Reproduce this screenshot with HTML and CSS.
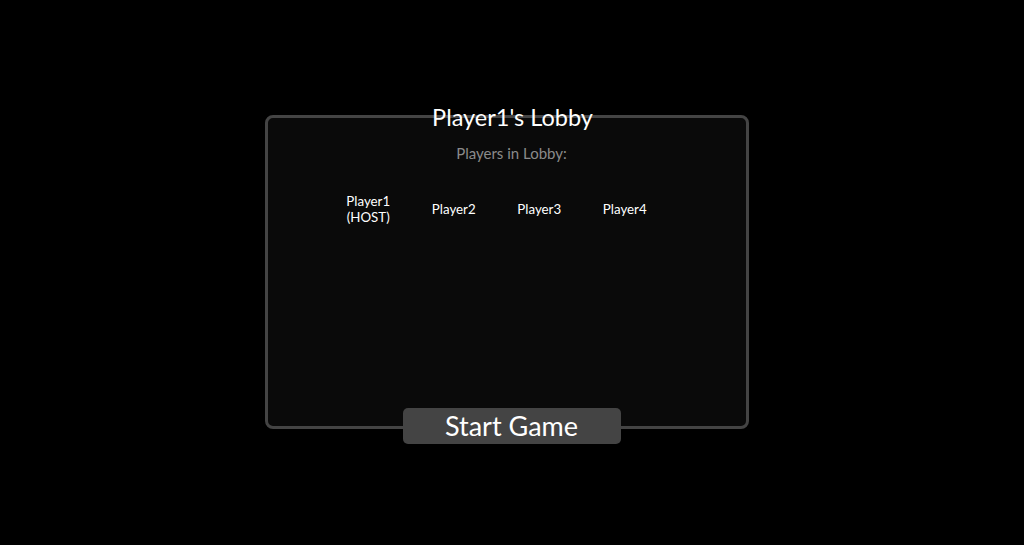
FILE: index.html
```
<!doctype html>
<html lang="en">
	<head>
		<meta charset="UTF-8" />
		<meta name="viewport" content="width=device-width, initial-scale=1.0" />
		<title>Lobby</title>
		<link rel="stylesheet" href="styles.css">
	</head>
	<body>
		<div class="lobby">
			<h1 class="lobby-title">Player1's Lobby</h1>
			<p class="lobby-sub">Players in Lobby:</p>
			<ul class="player-list">
				<li>Player1<br>(HOST)</li>
				<li>Player2</li>
				<li>Player3</li>
				<li>Player4</li>
			</ul>
			<button class="start-btn">Start Game</button>
		</div>
	</body>
</html>
```

FILE: styles.css
```
html, body {
	height: 100%;
}
body {
	margin: 0;
	background: #000;
	font-family: Lato, 'Open Sans', sans-serif;
	color: #fff;
	display: flex;
	align-items: center;
	justify-content: center;
}
.lobby {
	position: relative;
	box-sizing: border-box;
	width: 484px;
	height: 314px;
	margin: 0 11px 1px 0;
	padding-top: 25px;
	background: #0a0a0a;
	border: 3px solid #444;
	border-radius: 8px;
	display: flex;
	flex-direction: column;
	align-items: center;
}
.lobby-title {
	position: absolute;
	top: -16px;
	left: 6px;
	right: -6px;
	margin: 0;
	text-align: center;
	font-size: 23.5px;
	font-weight: 400;
	line-height: 30px;
}
.lobby-sub {
	margin: 0 0 30px 10px;
	color: #8a8a8a;
	font-size: 15px;
	line-height: 20px;
}
.player-list {
	list-style: none;
	margin: 0;
	padding: 0 0 0 58px;
	align-self: stretch;
	display: grid;
	grid-template-columns: repeat(4, 85.5px);
	align-items: center;
	text-align: center;
	font-size: 13.3px;
	line-height: 16px;
}
.start-btn {
	position: absolute;
	bottom: -18px;
	left: calc(50% - 104px);
	width: 218px;
	height: 36px;
	padding: 0;
	border: none;
	border-radius: 5px;
	background: #444;
	color: #fff;
	font-family: inherit;
	font-size: 27px;
	line-height: 36px;
}
```
